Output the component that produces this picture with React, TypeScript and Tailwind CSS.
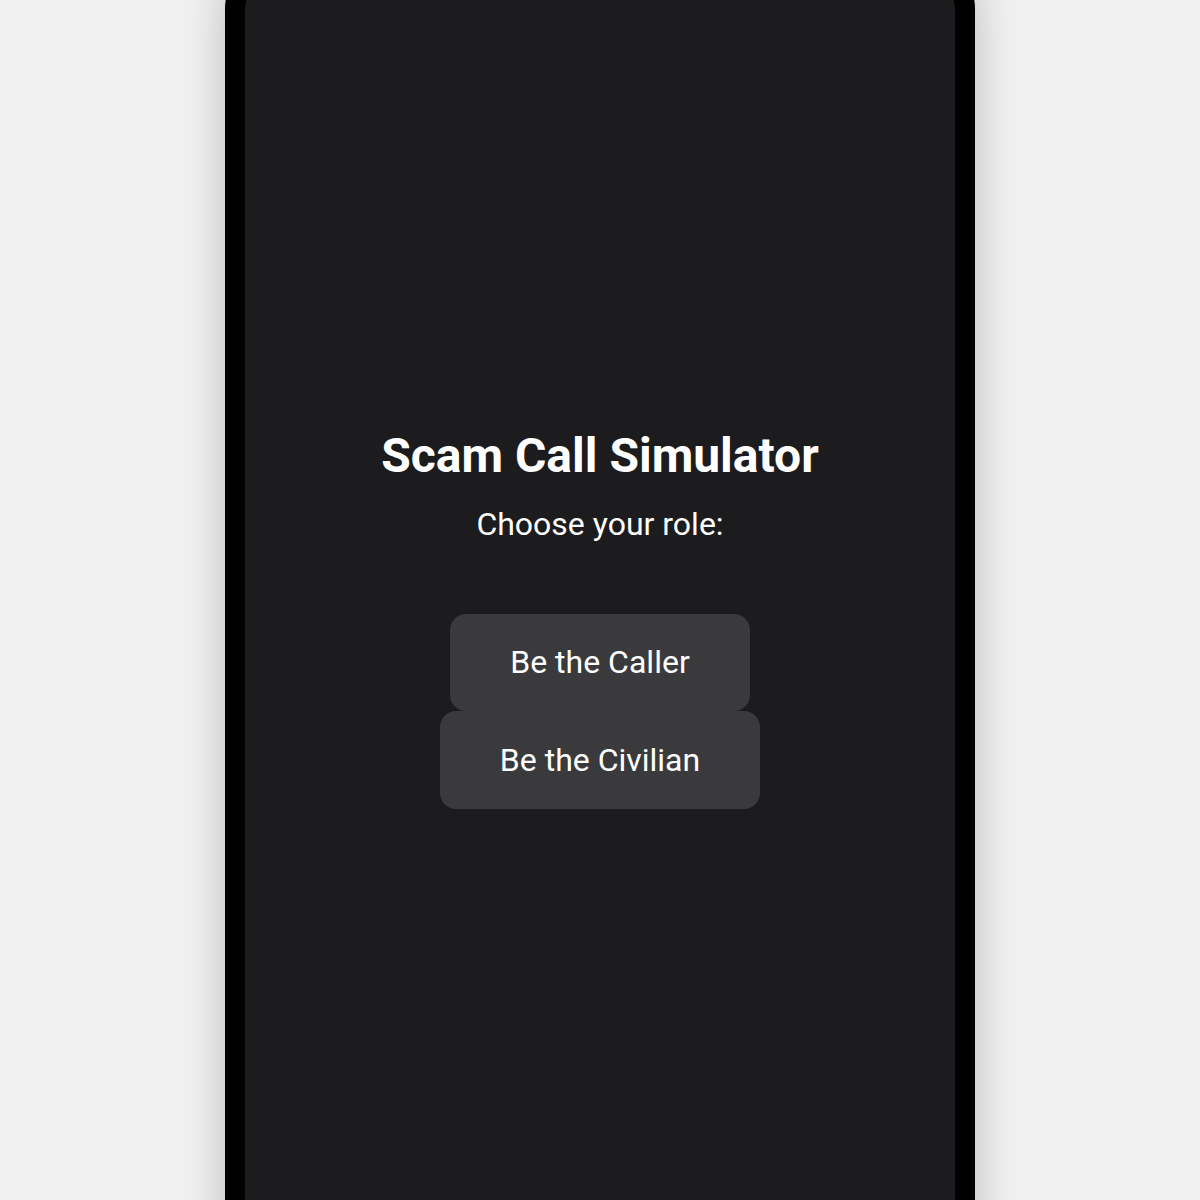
export default function App() {
  return (
    <div className="min-h-screen h-[1200px] overflow-hidden bg-[#f0f0f0] flex justify-center font-['Roboto',sans-serif]">
      {/* Phone frame */}
      <div className="w-[750px] h-[1300px] -mt-[32px] shrink-0 rounded-[40px] border-[20px] border-black bg-[#1c1c1e] shadow-[0_0_40px_rgba(0,0,0,0.22)] flex flex-col items-center justify-center text-white">
        <div className="flex flex-col items-center">
          <h1 className="text-[48px] leading-[56px] font-bold">Scam Call Simulator</h1>
          <p className="mt-[21px] text-[32px] leading-[38px]">Choose your role:</p>
          <div className="mt-[71px] flex flex-col items-center">
            <button className="px-[60px] py-[30px] rounded-[16px] bg-[#3a3a3c] text-[32px] leading-[37px] text-white">
              Be the Caller
            </button>
            <button className="px-[60px] py-[30px] rounded-[16px] bg-[#3a3a3c] text-[32px] leading-[38px] text-white">
              Be the Civilian
            </button>
          </div>
        </div>
      </div>
    </div>
  );
}
